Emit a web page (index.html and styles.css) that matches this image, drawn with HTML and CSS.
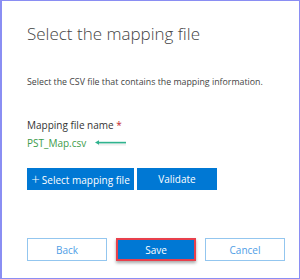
FILE: index.html
```html
<!DOCTYPE html>
<html lang="en">
<head>
    <meta charset="UTF-8">
    <title>Select the mapping file</title>
    <link rel="stylesheet" href="styles.css">
</head>
<body>
    <div class="frame">
        <h1>Select the mapping file</h1>
        <p class="intro">Select the CSV file that contains the mapping information.</p>

        <div class="label">Mapping file name <span class="req">*</span></div>
        <div class="file-row">
            <span class="file-name">PST_Map.csv</span>
            <svg class="arrow" width="34" height="8" viewBox="0 0 34 8">
                <path d="M1 3.5 L5 1.2 L5 5.8 Z" fill="#2fb38e"/>
                <rect x="4" y="2.8" width="28" height="1.6" fill="#2fb38e"/>
                <rect x="4" y="4.6" width="28" height="2" fill="rgba(0,0,0,0.06)"/>
            </svg>
        </div>

        <div class="actions">
            <button class="btn primary wide"><span class="plus">+</span>Select mapping file</button>
            <button class="btn primary">Validate</button>
        </div>

        <div class="footer">
            <button class="btn outline">Back</button>
            <button class="btn primary save">Save</button>
            <button class="btn outline">Cancel</button>
        </div>
    </div>
</body>
</html>
```

FILE: styles.css
```css
body {
    margin: 0;
    font-family: "Open Sans", "Noto Sans", sans-serif;
    background-color: #fff;
}
.frame {
    width: 300px;
    height: 279px;
    box-sizing: border-box;
    border: 1px solid #8a8ef3;
    border-left-width: 2px;
    padding: 0 0 0 25px;
}
h1 {
    margin: 22px 0 0;
    font-size: 17px;
    font-weight: 300;
    line-height: 22px;
    color: #444;
}
.intro {
    margin: 31px 0 0;
    font-size: 8.8px;
    line-height: 12px;
    color: #444;
}
.label {
    margin-top: 30px;
    font-size: 10px;
    line-height: 14px;
    color: #333;
}
.req {
    color: #c4262e;
}
.file-row {
    display: flex;
    align-items: center;
    margin-top: 4px;
    height: 14px;
}
.file-name {
    font-size: 10px;
    color: #3d9b4a;
}
.arrow {
    margin-left: 8px;
}
.actions {
    display: flex;
    gap: 3px;
    margin-top: 18px;
}
.btn {
    font-family: inherit;
    font-size: 10px;
    height: 22px;
    border-radius: 0;
    padding: 0;
    cursor: pointer;
}
.primary {
    background-color: #0078d4;
    color: #fff;
    border: none;
    width: 80px;
}
.wide {
    width: 107px;
}
.plus {
    font-size: 15px;
    font-weight: 300;
    margin-right: 2px;
    vertical-align: -1px;
}
.footer {
    display: flex;
    align-items: center;
    gap: 9px;
    margin-top: 48px;
}
.outline {
    width: 80px;
    height: 23px;
    background-color: #fff;
    border: 1px solid #93c6ef;
    color: #4f9ee6;
}
.save {
    width: 80px;
    height: 23px;
    border: 2px solid #e8404c;
    box-shadow: 0 2px 3px rgba(0, 0, 0, 0.35);
}
```
